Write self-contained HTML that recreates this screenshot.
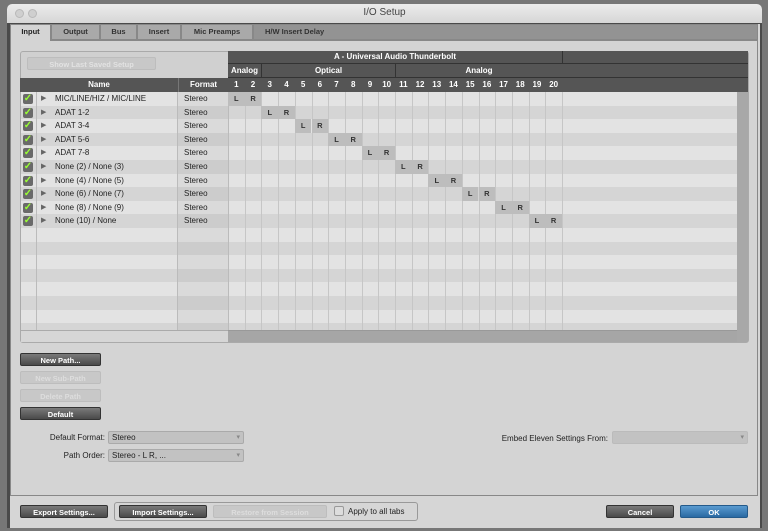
<!DOCTYPE html>
<html><head><style>
*{box-sizing:border-box;margin:0;padding:0}
body{width:768px;height:531px;background:#777;font-family:"Liberation Sans",sans-serif;font-size:8px;color:#222;position:relative;overflow:hidden}
.a{position:absolute}
.win{left:7px;top:4px;width:755px;height:524px;background:#4a4a4a;border-radius:5px 5px 0 0;overflow:hidden}
.title{left:0;top:0;width:755px;height:19px;background:linear-gradient(#ececec,#d6d6d6);text-align:center;font-size:10px;line-height:18px;color:#444}
.dot{width:9px;height:9px;border-radius:50%;background:#cfcfcf;border:1px solid #b8b8b8;top:9px}
.tab{top:24px;height:16px;background:#a9a9a9;border:1px solid #888;font-weight:bold;font-size:7.5px;line-height:14px;text-align:center;color:#333}
.btn{height:13px;border-radius:2px;font-weight:bold;font-size:7.5px;line-height:13px;text-align:center;color:#fff;background:linear-gradient(#7a7a7a,#4a4a4a);border:1px solid #333}
.dis{background:#c8c8c8;border:1px solid #bdbdbd;color:#ddd}
.dd{height:13px;background:#c2c2c2;border:1px solid #aaa;border-radius:2px;font-size:8px;line-height:11px;padding-left:3px}
.dd:after{content:"▾";position:absolute;right:3px;top:0;color:#888;font-size:7px}
.hd{background:#555;color:#fff;font-weight:bold;text-align:center}
.cell{font-weight:bold;font-size:7.5px;text-align:center;color:#333;background:#bdbdbd;line-height:13px;height:13.6px;width:16.7px}
</style></head><body>
<div class="a win">
<div class="a title">I/O Setup</div>
<div class="a" style="left:3px;top:20px;width:750px;height:504px;background:#d6d6d6"></div>
</div>
<div class="a dot" style="left:15px"></div><div class="a dot" style="left:28px"></div>
<div class="a" style="left:10px;top:24px;width:748px;height:16px;background:#939393"></div>
<div class="a" style="left:10px;top:40px;width:748px;height:456px;background:#d4d4d4;border:1px solid #888"></div>
<div class="a tab" style="left:10px;width:41px;background:#d4d4d4;border-bottom:none;height:17px;color:#222">Input</div>
<div class="a tab" style="left:51px;width:49px">Output</div>
<div class="a tab" style="left:100px;width:37px">Bus</div>
<div class="a tab" style="left:137px;width:44px">Insert</div>
<div class="a tab" style="left:181px;width:72px">Mic Preamps</div>
<div class="a tab" style="left:253px;width:505px;text-align:left;padding-left:11px;background:#939393">H/W Insert Delay</div>
<div class="a" style="left:20px;top:51px;width:729px;height:292px;border:1px solid #aaa;border-radius:3px;background:#d0d0d0;overflow:hidden">
<div class="a btn dis" style="left:6px;top:5px;width:129px;color:#e2e2e2">Show Last Saved Setup</div>
</div>
<div class="a hd" style="left:20px;top:78px;width:158px;height:14px;line-height:14px;font-size:8px">Name</div>
<div class="a hd" style="left:178px;top:78px;width:50px;height:14px;line-height:14px;font-size:8px;border-left:1px solid #777">Format</div>
<div class="a hd" style="left:228px;top:51px;width:520px;height:13px;line-height:12px;border-bottom:1px solid #333"><span style="position:absolute;left:0;width:334px">A - Universal Audio Thunderbolt</span><span style="position:absolute;left:334px;top:0;width:1px;height:41px;background:#333"></span></div>
<div class="a hd" style="left:228px;top:64px;width:520px;height:14px;line-height:13px;border-bottom:1px solid #333">
<span class="a" style="left:0;width:33px">Analog</span><span class="a" style="left:33px;width:1px;height:27px;background:#333"></span>
<span class="a" style="left:34px;width:133px">Optical</span><span class="a" style="left:167px;width:1px;height:14px;background:#333"></span>
<span class="a" style="left:168px;width:166px">Analog</span></div>
<div class="a hd" id="nums" style="left:228px;top:78px;width:520px;height:14px;line-height:14px"></div>
<div class="a" id="rows" style="left:21px;top:92px;width:727px;height:238px;overflow:hidden"></div>
<div class="a" style="left:21px;top:330px;width:207px;height:12px;background:#d6d6d6;border-top:1px solid #aaa"></div>
<div class="a" style="left:228px;top:330px;width:520px;height:12px;background:#a6a6a6;border-top:1px solid #999"></div>
<div class="a" style="left:737px;top:92px;width:11px;height:250px;background:#a8a8a8"></div>
<div class="a btn" style="left:20px;top:353px;width:81px">New Path...</div>
<div class="a btn dis" style="left:20px;top:371px;width:81px">New Sub-Path</div>
<div class="a btn dis" style="left:20px;top:389px;width:81px">Delete Path</div>
<div class="a btn" style="left:20px;top:407px;width:81px">Default</div>
<div class="a" style="left:20px;top:433px;width:85px;text-align:right;font-size:8px">Default Format:</div>
<div class="a dd" style="left:108px;top:431px;width:136px">Stereo</div>
<div class="a" style="left:20px;top:451px;width:85px;text-align:right;font-size:8px">Path Order:</div>
<div class="a dd" style="left:108px;top:449px;width:136px">Stereo - L R, ...</div>
<div class="a" style="left:440px;top:434px;width:168px;text-align:right;font-size:8px">Embed Eleven Settings From:</div>
<div class="a dd" style="left:612px;top:431px;width:136px;border-color:#bbb"></div>
<div class="a btn" style="left:20px;top:505px;width:88px">Export Settings...</div>
<div class="a" style="left:114px;top:502px;width:304px;height:19px;border:1px solid #999;border-radius:3px"></div>
<div class="a btn" style="left:119px;top:505px;width:88px">Import Settings...</div>
<div class="a btn dis" style="left:213px;top:505px;width:114px">Restore from Session</div>
<div class="a" style="left:334px;top:506px;width:10px;height:10px;border:1px solid #999;border-radius:2px;background:#ddd"></div>
<div class="a" style="left:348px;top:507px;font-size:8px">Apply to all tabs</div>
<div class="a btn" style="left:606px;top:505px;width:68px">Cancel</div>
<div class="a btn" style="left:680px;top:505px;width:68px;background:linear-gradient(#5a9bd0,#2a6aa3);border-color:#245a8a">OK</div>
<script>
var n=document.getElementById('nums'),h='';
for(var i=1;i<=20;i++){h+='<span class="a" style="left:'+((i-1)*16.7)+'px;width:16.7px">'+i+'</span>';}
n.innerHTML=h;
var names=["MIC/LINE/HIZ / MIC/LINE","ADAT 1-2","ADAT 3-4","ADAT 5-6","ADAT 7-8","None (2) / None (3)","None (4) / None (5)","None (6) / None (7)","None (8) / None (9)","None (10) / None"];
var r=document.getElementById('rows'),s='';
for(var k=0;k<18;k++){var y=k*13.6;var bg=k%2?'#d5d5d5':'#e3e3e3';
s+='<div class="a" style="left:0;top:'+y+'px;width:727px;height:13.6px;background:'+bg+'"></div>';}
s+='<div class="a" style="left:15px;top:0;width:1px;height:238px;background:#bbb"></div>';
s+='<div class="a" style="left:156px;top:0;width:1px;height:238px;background:#bbb"></div>';
s+='<div class="a" style="left:157px;top:0;width:50px;height:238px;background:rgba(0,0,0,0.04)"></div>';
s+='<div class="a" style="left:207px;top:0;width:1px;height:238px;background:#bbb"></div>';
for(var i=1;i<=20;i++){s+='<div class="a" style="left:'+(207+i*16.7)+'px;top:0;width:1px;height:238px;background:#c6c6c6"></div>';}
for(var k=0;k<10;k++){var y=k*13.6;
s+='<div class="a" style="left:2px;top:'+(y+2)+'px;width:10px;height:10px;background:#6a6a6a;border-radius:2px;color:#9f3;font-size:10px;line-height:10px;text-align:center;font-weight:bold">✓</div>';
s+='<div class="a" style="left:20px;top:'+y+'px;line-height:13.6px;font-size:7px;color:#666">▶</div>';
s+='<div class="a" style="left:34px;top:'+y+'px;line-height:13.6px;font-size:8px">'+names[k]+'</div>';
s+='<div class="a" style="left:163px;top:'+y+'px;line-height:13.6px;font-size:8px">Stereo</div>';
s+='<div class="a cell" style="left:'+(207+k*33.4)+'px;top:'+y+'px">L</div>';
s+='<div class="a cell" style="left:'+(207+16.7+k*33.4)+'px;top:'+y+'px">R</div>';}
r.innerHTML=s;
</script>
</body></html>
